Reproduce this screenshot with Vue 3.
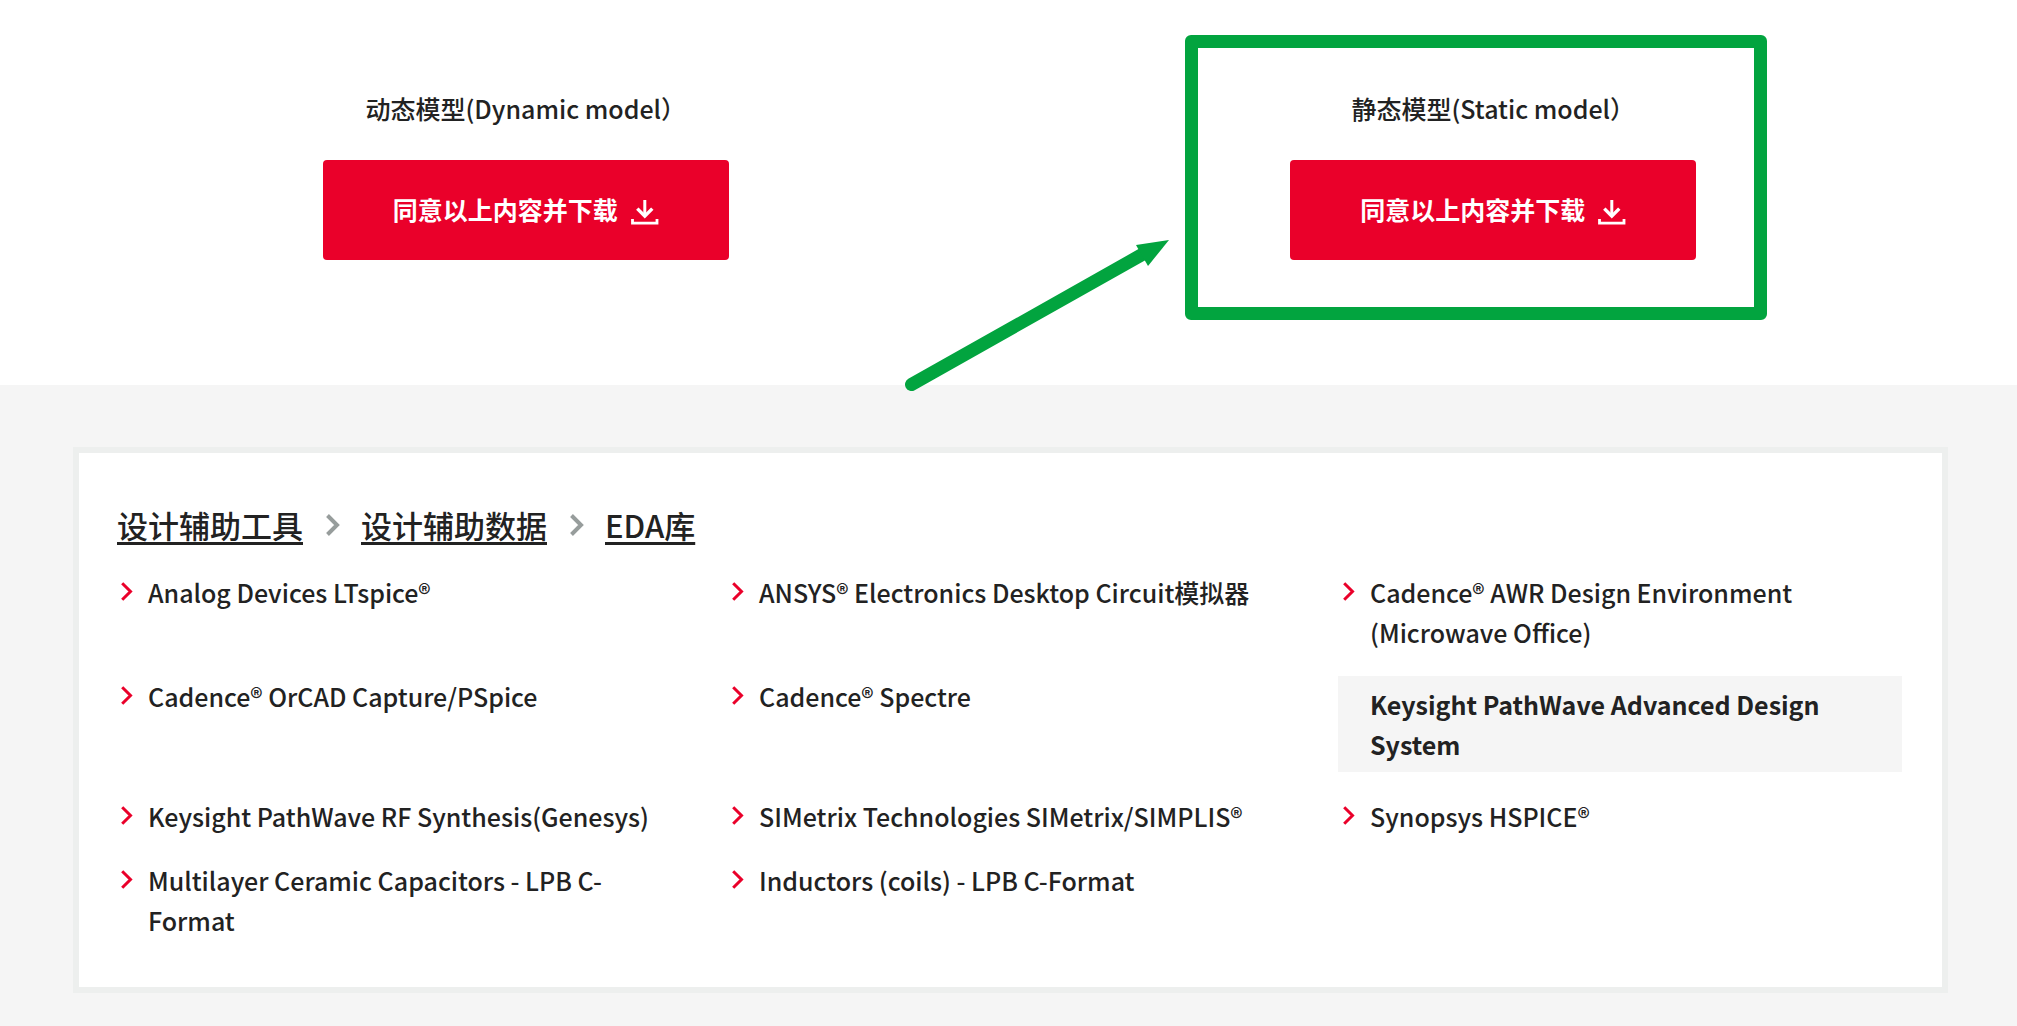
<script setup>
const models = [
  { label: '动态模型(Dynamic model）', marked: false },
  { label: '静态模型(Static model）', marked: true },
]

const crumbs = ['设计辅助工具', '设计辅助数据', 'EDA库']

const libraries = [
  { name: 'Analog Devices LTspice®' },
  { name: 'ANSYS® Electronics Desktop Circuit模拟器' },
  { name: 'Cadence® AWR Design Environment (Microwave Office)' },
  { name: 'Cadence® OrCAD Capture/PSpice' },
  { name: 'Cadence® Spectre' },
  { name: 'Keysight PathWave Advanced Design System', current: true },
  { name: 'Keysight PathWave RF Synthesis(Genesys)' },
  { name: 'SIMetrix Technologies SIMetrix/SIMPLIS®' },
  { name: 'Synopsys HSPICE®' },
  { name: 'Multilayer Ceramic Capacitors - LPB C-Format' },
  { name: 'Inductors (coils) - LPB C-Format' },
]
</script>

<template>
  <main class="page">
    <section class="downloads">
      <div v-for="model in models" :key="model.label" class="model">
        <p class="model-label">{{ model.label }}</p>
        <button type="button" class="download">
          <span>同意以上内容并下载</span>
          <svg class="download-icon" width="28" height="26" viewBox="0 0 28 26" fill="none" stroke="#fff" aria-hidden="true">
            <path d="M13.8 1V17" stroke-width="3" />
            <path d="M6.3 9.6L13.8 17.2L21.3 9.6" stroke-width="3.4" />
            <path d="M1.5 20V24.2H26V20" stroke-width="2.8" />
          </svg>
        </button>
        <template v-if="model.marked">
          <div class="mark-frame"></div>
          <svg class="mark-arrow" width="266" height="154" viewBox="0 0 266 154" aria-hidden="true">
            <path d="M8.5 146.5L240 16" stroke="#02a43f" stroke-width="13" stroke-linecap="round" />
            <path d="M266 2L233 7L245 28Z" fill="#02a43f" />
          </svg>
        </template>
      </div>
    </section>

    <section class="related">
      <div class="panel">
        <nav class="crumbs">
          <template v-for="(crumb, i) in crumbs" :key="crumb">
            <svg v-if="i" class="crumb-chevron" width="14" height="22" viewBox="0 0 14 22" fill="none" stroke="#979d9c" stroke-width="4" aria-hidden="true">
              <path d="M1.5 1.5L11 11L1.5 20.5" />
            </svg>
            <a href="#" class="crumb">{{ crumb }}</a>
          </template>
        </nav>
        <ul class="libraries">
          <li v-for="lib in libraries" :key="lib.name" class="library">
            <strong v-if="lib.current" class="library-current">{{ lib.name }}</strong>
            <a v-else href="#" class="library-link">
              <svg class="library-chevron" width="12" height="19" viewBox="0 0 12 19" fill="none" stroke="#ea002a" stroke-width="3" aria-hidden="true">
                <path d="M1.2 1.2L9.5 9.5L1.2 17.8" />
              </svg>
              <span>{{ lib.name }}</span>
            </a>
          </li>
        </ul>
      </div>
    </section>
  </main>
</template>

<style>
body {
  margin: 0;
  background: #f5f5f5;
}
</style>

<style scoped>
.page {
  font-family: "Noto Sans CJK SC", "Noto Sans", sans-serif;
  font-size: 25px;
  font-weight: 500;
  line-height: 40px;
  color: #222;
}

.downloads {
  display: grid;
  grid-template-columns: 1fr 1fr;
  padding: 88px 40px 125px 42px;
  background: #fff;
}

.model {
  position: relative;
  display: flex;
  flex-direction: column;
  align-items: center;
  gap: 32px;
}

.model-label {
  margin: 0;
}

.download {
  display: flex;
  align-items: center;
  justify-content: center;
  gap: 13px;
  width: 406px;
  height: 100px;
  padding: 0 0 2px;
  border: 0;
  border-radius: 4px;
  background: #ea002a;
  color: #fff;
  font: inherit;
  font-weight: 700;
  cursor: pointer;
}

.download-icon {
  margin-top: 6px;
}

.mark-frame {
  position: absolute;
  top: -53px;
  left: calc(50% - 308px);
  box-sizing: border-box;
  width: 582px;
  height: 285px;
  border: 13px solid #02a43f;
  border-radius: 6px;
  pointer-events: none;
}

.mark-arrow {
  position: absolute;
  top: 150px;
  left: -107px;
  z-index: 1;
  pointer-events: none;
}

.related {
  padding: 62px 69px 33px 73px;
  background: #f5f5f5;
}

.panel {
  padding: 47px 40px 47px 37px;
  border: 6px solid #edefee;
  background: #fff;
}

.crumbs {
  display: flex;
  align-items: center;
  gap: 22px;
  height: 50px;
  padding-left: 1px;
  font-size: 31px;
}

.crumb {
  color: inherit;
  text-decoration: underline;
  text-decoration-thickness: 3px;
  text-underline-offset: 4px;
  text-decoration-skip-ink: none;
}

.crumb-chevron {
  margin: 0 -1px 0 1px;
}

.libraries {
  display: grid;
  grid-template-columns: repeat(3, 1fr);
  gap: 24px 47px;
  margin: 22px 0 0;
  padding: 0;
  list-style: none;
}

.library-link {
  display: flex;
  align-items: flex-start;
  gap: 15px;
  padding-left: 5px;
  color: inherit;
  text-decoration: none;
}

.library-chevron {
  flex: none;
  margin-top: 10px;
}

.library-current {
  display: block;
  padding: 8px 0 8px 32px;
  background: #f5f5f5;
}
</style>
